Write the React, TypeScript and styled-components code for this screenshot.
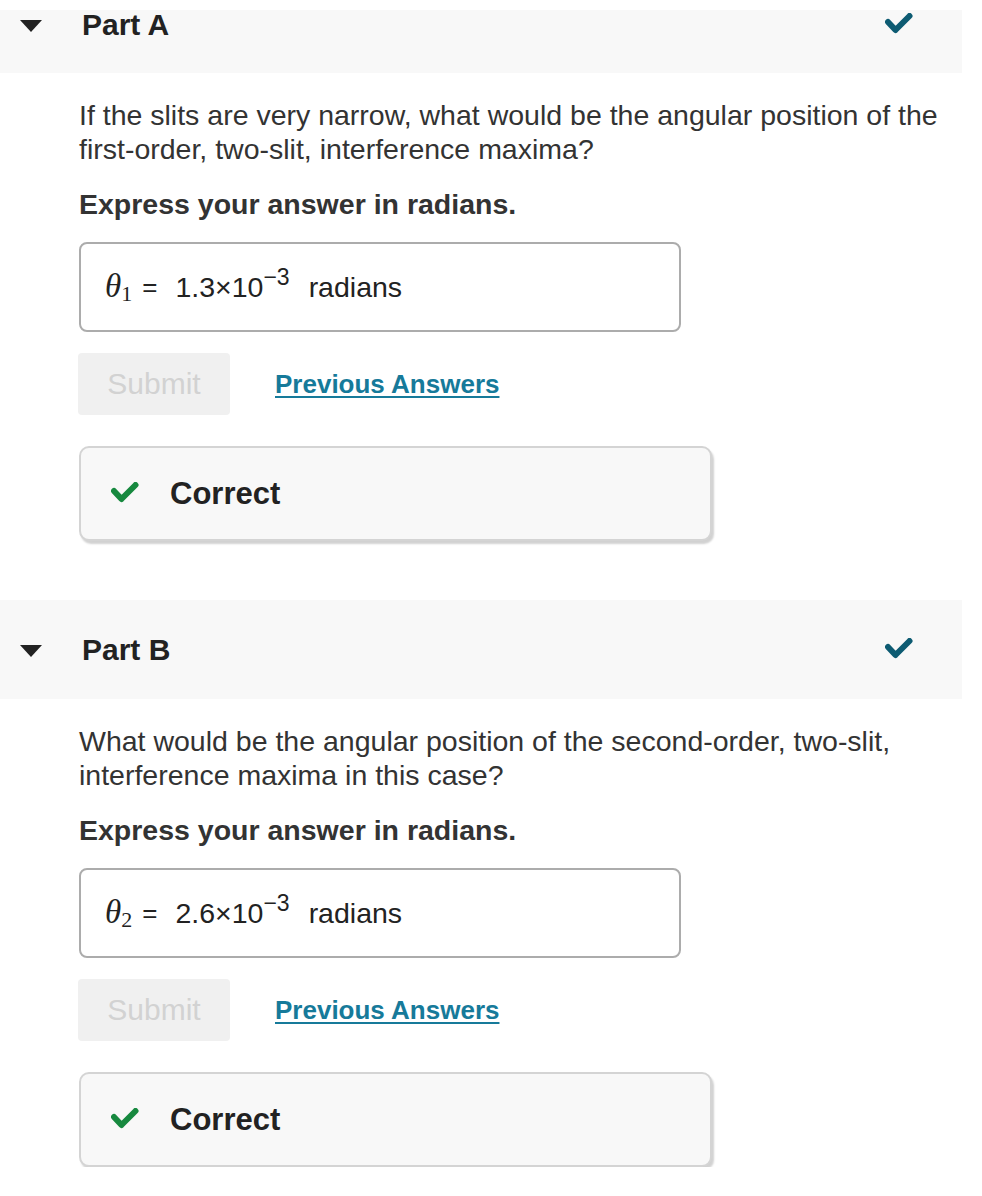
import styled, { createGlobalStyle } from 'styled-components';

const GlobalStyle = createGlobalStyle`
  html, body {
    margin: 0;
    padding: 0;
    background: #ffffff;
  }
  body {
    font-family: "Liberation Sans", Arial, Helvetica, sans-serif;
    color: #333333;
  }
`;

const Page = styled.div`
  width: 982px;
  padding-top: 10px;
  overflow: hidden;
`;

const PartSection = styled.section`
  display: flex;
  flex-direction: column;
`;

const PartHeader = styled.div<{ $clipped?: boolean }>`
  width: 962px;
  height: ${(p) => (p.$clipped ? '63px' : '99px')};
  box-sizing: border-box;
  background: #f8f8f8;
  display: flex;
  align-items: ${(p) => (p.$clipped ? 'flex-start' : 'center')};
  padding-left: 20px;
  padding-right: 49px;
`;

const HeaderRow = styled.div`
  flex: 1;
  display: flex;
  align-items: center;
  height: 30px;
`;

const Caret = styled.span`
  width: 0;
  height: 0;
  border-left: 11.5px solid transparent;
  border-right: 11.5px solid transparent;
  border-top: 12px solid #222222;
  margin-top: 2px;
`;

const PartTitle = styled.h2`
  margin: 0 0 0 40px;
  font-size: 30px;
  line-height: 30px;
  font-weight: 700;
  color: #222222;
  flex: 1;
`;

const DoneMark = styled.svg`
  width: 28px;
  height: 22px;
  margin-top: -2px;
`;

const Body = styled.div`
  padding-left: 79px;
  padding-top: 25px;
  display: flex;
  flex-direction: column;
  align-items: flex-start;
`;

const Question = styled.p`
  margin: 0;
  width: 880px;
  font-size: 28.5px;
  line-height: 34px;
  color: #333333;
`;

const Instruction = styled.p`
  margin: 21px 0 0;
  font-size: 28.5px;
  line-height: 34px;
  font-weight: 700;
  color: #333333;
`;

const AnswerBox = styled.div`
  margin-top: 21px;
  width: 602px;
  height: 90px;
  box-sizing: border-box;
  border: 2px solid #acacac;
  border-radius: 8px;
  background: #ffffff;
  display: flex;
  align-items: center;
  padding-left: 24px;
  color: #222222;
`;

const MathVar = styled.span`
  font-family: "Liberation Serif", "Times New Roman", serif;
  font-style: italic;
  font-size: 33px;
`;

const MathSub = styled.sub`
  font-family: "Liberation Serif", "Times New Roman", serif;
  font-style: normal;
  font-size: 22px;
  vertical-align: -4px;
`;

const Equals = styled.span`
  font-size: 26px;
  margin: 0 18px 0 10px;
`;

const Value = styled.span`
  font-size: 28.5px;
`;

const Sup = styled.sup`
  font-size: 23px;
  vertical-align: 12px;
  line-height: 0;
`;

const Unit = styled.span`
  font-size: 28.5px;
  margin-left: 19px;
`;

const ActionRow = styled.div`
  margin-top: 21px;
  display: flex;
  align-items: center;
  gap: 45px;
`;

const SubmitButton = styled.button`
  width: 152px;
  height: 62px;
  margin-left: -1px;
  border: none;
  border-radius: 4px;
  background: #f0f0f0;
  color: #d2d2d2;
  font-family: "Liberation Sans", Arial, sans-serif;
  font-size: 30px;
  padding: 0;
  cursor: default;
`;

const PrevLink = styled.a`
  font-size: 26px;
  font-weight: 700;
  color: #167a9a;
  text-decoration: underline;
  text-decoration-thickness: 2px;
  text-underline-offset: 3px;
  cursor: pointer;
`;

const Feedback = styled.div<{ $last?: boolean }>`
  margin-top: 31px;
  margin-bottom: ${(p) => (p.$last ? '0' : '59px')};
  width: 633px;
  height: 95px;
  box-sizing: border-box;
  border: 2px solid #d4d4d4;
  border-radius: 10px;
  background: #f8f8f8;
  box-shadow: 2px 3px 2px rgba(0, 0, 0, 0.18);
  display: flex;
  align-items: center;
  padding-left: 30px;
  gap: 31px;
`;

const FeedbackText = styled.span`
  font-size: 31px;
  font-weight: 700;
  color: #222222;
`;

const CheckIcon = ({ color }: { color: string }) => (
  <DoneMark viewBox="0 0 28 22">
    <polyline
      points="3,9 10.5,17 24.5,3"
      fill="none"
      stroke={color}
      strokeWidth={6}
      strokeLinecap="round"
      strokeLinejoin="round"
    />
  </DoneMark>
);

interface PartProps {
  title: string;
  question: string;
  symbolIndex: string;
  mantissa: string;
  clipped?: boolean;
  last?: boolean;
}

const Part = ({ title, question, symbolIndex, mantissa, clipped, last }: PartProps) => (
  <PartSection>
    <PartHeader $clipped={clipped}>
      <HeaderRow>
        <Caret />
        <PartTitle>{title}</PartTitle>
        <CheckIcon color="#0d5b72" />
      </HeaderRow>
    </PartHeader>
    <Body>
      <Question>{question}</Question>
      <Instruction>Express your answer in radians.</Instruction>
      <AnswerBox>
        <MathVar>
          θ<MathSub>{symbolIndex}</MathSub>
        </MathVar>
        <Equals>=</Equals>
        <Value>
          {mantissa}×10<Sup>−3</Sup>
        </Value>
        <Unit>radians</Unit>
      </AnswerBox>
      <ActionRow>
        <SubmitButton disabled>Submit</SubmitButton>
        <PrevLink>Previous Answers</PrevLink>
      </ActionRow>
      <Feedback $last={last}>
        <CheckIcon color="#17893f" />
        <FeedbackText>Correct</FeedbackText>
      </Feedback>
    </Body>
  </PartSection>
);

export default function App() {
  return (
    <Page>
      <GlobalStyle />
      <Part
        clipped
        title="Part A"
        question="If the slits are very narrow, what would be the angular position of the first-order, two-slit, interference maxima?"
        symbolIndex="1"
        mantissa="1.3"
      />
      <Part
        last
        title="Part B"
        question="What would be the angular position of the second-order, two-slit, interference maxima in this case?"
        symbolIndex="2"
        mantissa="2.6"
      />
    </Page>
  );
}
